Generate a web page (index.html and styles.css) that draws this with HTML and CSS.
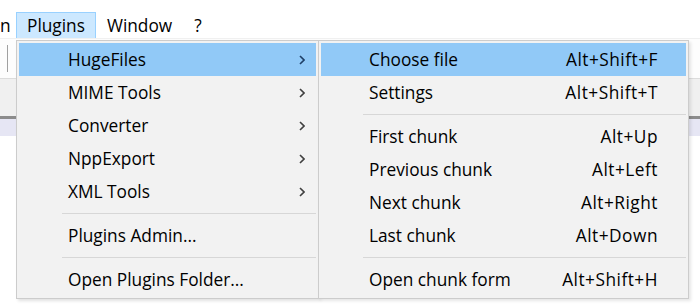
FILE: index.html
```html
<!DOCTYPE html>
<html lang="en">
<head>
    <meta charset="UTF-8">
    <title>Plugins menu</title>
    <link rel="stylesheet" href="styles.css">
</head>
<body>
    <div class="app">
        <div class="menubar">
            <span class="menubar-item cut">n</span>
            <span class="menubar-item open">Plugins</span>
            <span class="menubar-item">Window</span>
            <span class="menubar-item">?</span>
        </div>
        <div class="toolbar">
            <div class="toolbar-sep"></div>
        </div>
        <div class="tabbar"></div>
        <div class="tabline"></div>
        <div class="editor"></div>
    </div>

    <div class="menu menu-main">
        <div class="item active">
            <span class="label">HugeFiles</span>
            <svg class="arrow" width="6" height="10" viewBox="0 0 6 10"><polyline points="1,1 5,5 1,9" /></svg>
        </div>
        <div class="item">
            <span class="label">MIME Tools</span>
            <svg class="arrow" width="6" height="10" viewBox="0 0 6 10"><polyline points="1,1 5,5 1,9" /></svg>
        </div>
        <div class="item">
            <span class="label">Converter</span>
            <svg class="arrow" width="6" height="10" viewBox="0 0 6 10"><polyline points="1,1 5,5 1,9" /></svg>
        </div>
        <div class="item">
            <span class="label">NppExport</span>
            <svg class="arrow" width="6" height="10" viewBox="0 0 6 10"><polyline points="1,1 5,5 1,9" /></svg>
        </div>
        <div class="item">
            <span class="label">XML Tools</span>
            <svg class="arrow" width="6" height="10" viewBox="0 0 6 10"><polyline points="1,1 5,5 1,9" /></svg>
        </div>
        <div class="sep"></div>
        <div class="item"><span class="label">Plugins Admin...</span></div>
        <div class="sep"></div>
        <div class="item"><span class="label">Open Plugins Folder...</span></div>
    </div>

    <div class="menu menu-sub">
        <div class="item active"><span class="label">Choose file</span><span class="key">Alt+Shift+F</span></div>
        <div class="item"><span class="label">Settings</span><span class="key">Alt+Shift+T</span></div>
        <div class="sep"></div>
        <div class="item"><span class="label">First chunk</span><span class="key">Alt+Up</span></div>
        <div class="item"><span class="label">Previous chunk</span><span class="key">Alt+Left</span></div>
        <div class="item"><span class="label">Next chunk</span><span class="key">Alt+Right</span></div>
        <div class="item"><span class="label">Last chunk</span><span class="key">Alt+Down</span></div>
        <div class="sep"></div>
        <div class="item"><span class="label">Open chunk form</span><span class="key">Alt+Shift+H</span></div>
    </div>
</body>
</html>
```

FILE: styles.css
```css
body {
    margin: 0;
    width: 700px;
    height: 308px;
    overflow: hidden;
    background: #ffffff;
    font-family: "Open Sans", "Noto Sans", sans-serif;
    font-size: 17.3px;
    color: #000;
    position: relative;
}
.app {
    display: flex;
    flex-direction: column;
    height: 308px;
}
.menubar {
    display: flex;
    align-items: stretch;
    height: 26px;
    padding-top: 12px;
    background: #fff;
}
.menubar-item {
    display: flex;
    align-items: center;
    padding: 0 10px;
    border: 1px solid transparent;
}
.menubar-item.cut {
    padding: 0;
    border: none;
    width: 16px;
}
.menubar-item.open {
    background: #cce8ff;
    border-color: #99d1ff;
    border-bottom: none;
}
.toolbar {
    height: 39px;
    border-top: 1px solid #f0f0f0;
    background: #fdfdfd;
    display: flex;
    align-items: center;
    padding-left: 7px;
}
.toolbar-sep {
    width: 1px;
    height: 27px;
    background: #a0a0a0;
}
.tabbar {
    height: 37px;
    background: #f0f0f0;
    border-top: 1px solid #dcdcdc;
}
.tabline {
    height: 3px;
    background: #8c8c8c;
}
.tabline + .editor {
    border-top: 17px solid #e6e6f4;
}
.editor {
    flex: 1;
    background: #fff;
}
.menu {
    position: absolute;
    top: 40px;
    background: #f2f2f2;
    border: 1px solid #cccccc;
    padding: 2px;
    box-shadow: 2px 2px 3px rgba(0, 0, 0, 0.12);
}
.menu-main {
    left: 16px;
    width: 297px;
}
.menu-sub {
    left: 318px;
    width: 365px;
    box-shadow: 2px 2px 3px rgba(0, 0, 0, 0.1);
}
.item {
    display: flex;
    align-items: center;
    height: 33px;
    padding-left: 49px;
    padding-right: 11px;
}
.menu-sub .item {
    padding-left: 48px;
    padding-right: 28px;
}
.item.active {
    background: #91c9f7;
}
.label {
    flex: 1;
    white-space: nowrap;
}
.key {
    white-space: nowrap;
    letter-spacing: 0.5px;
}
.arrow polyline {
    fill: none;
    stroke: #404040;
    stroke-width: 1.6;
}
.item.active .arrow polyline {
    stroke: #1f3f66;
}
.sep {
    height: 1px;
    margin: 5px 0 5px 43px;
    background: #d7d7d7;
}
.menu-sub .sep {
    margin-left: 42px;
}
```
